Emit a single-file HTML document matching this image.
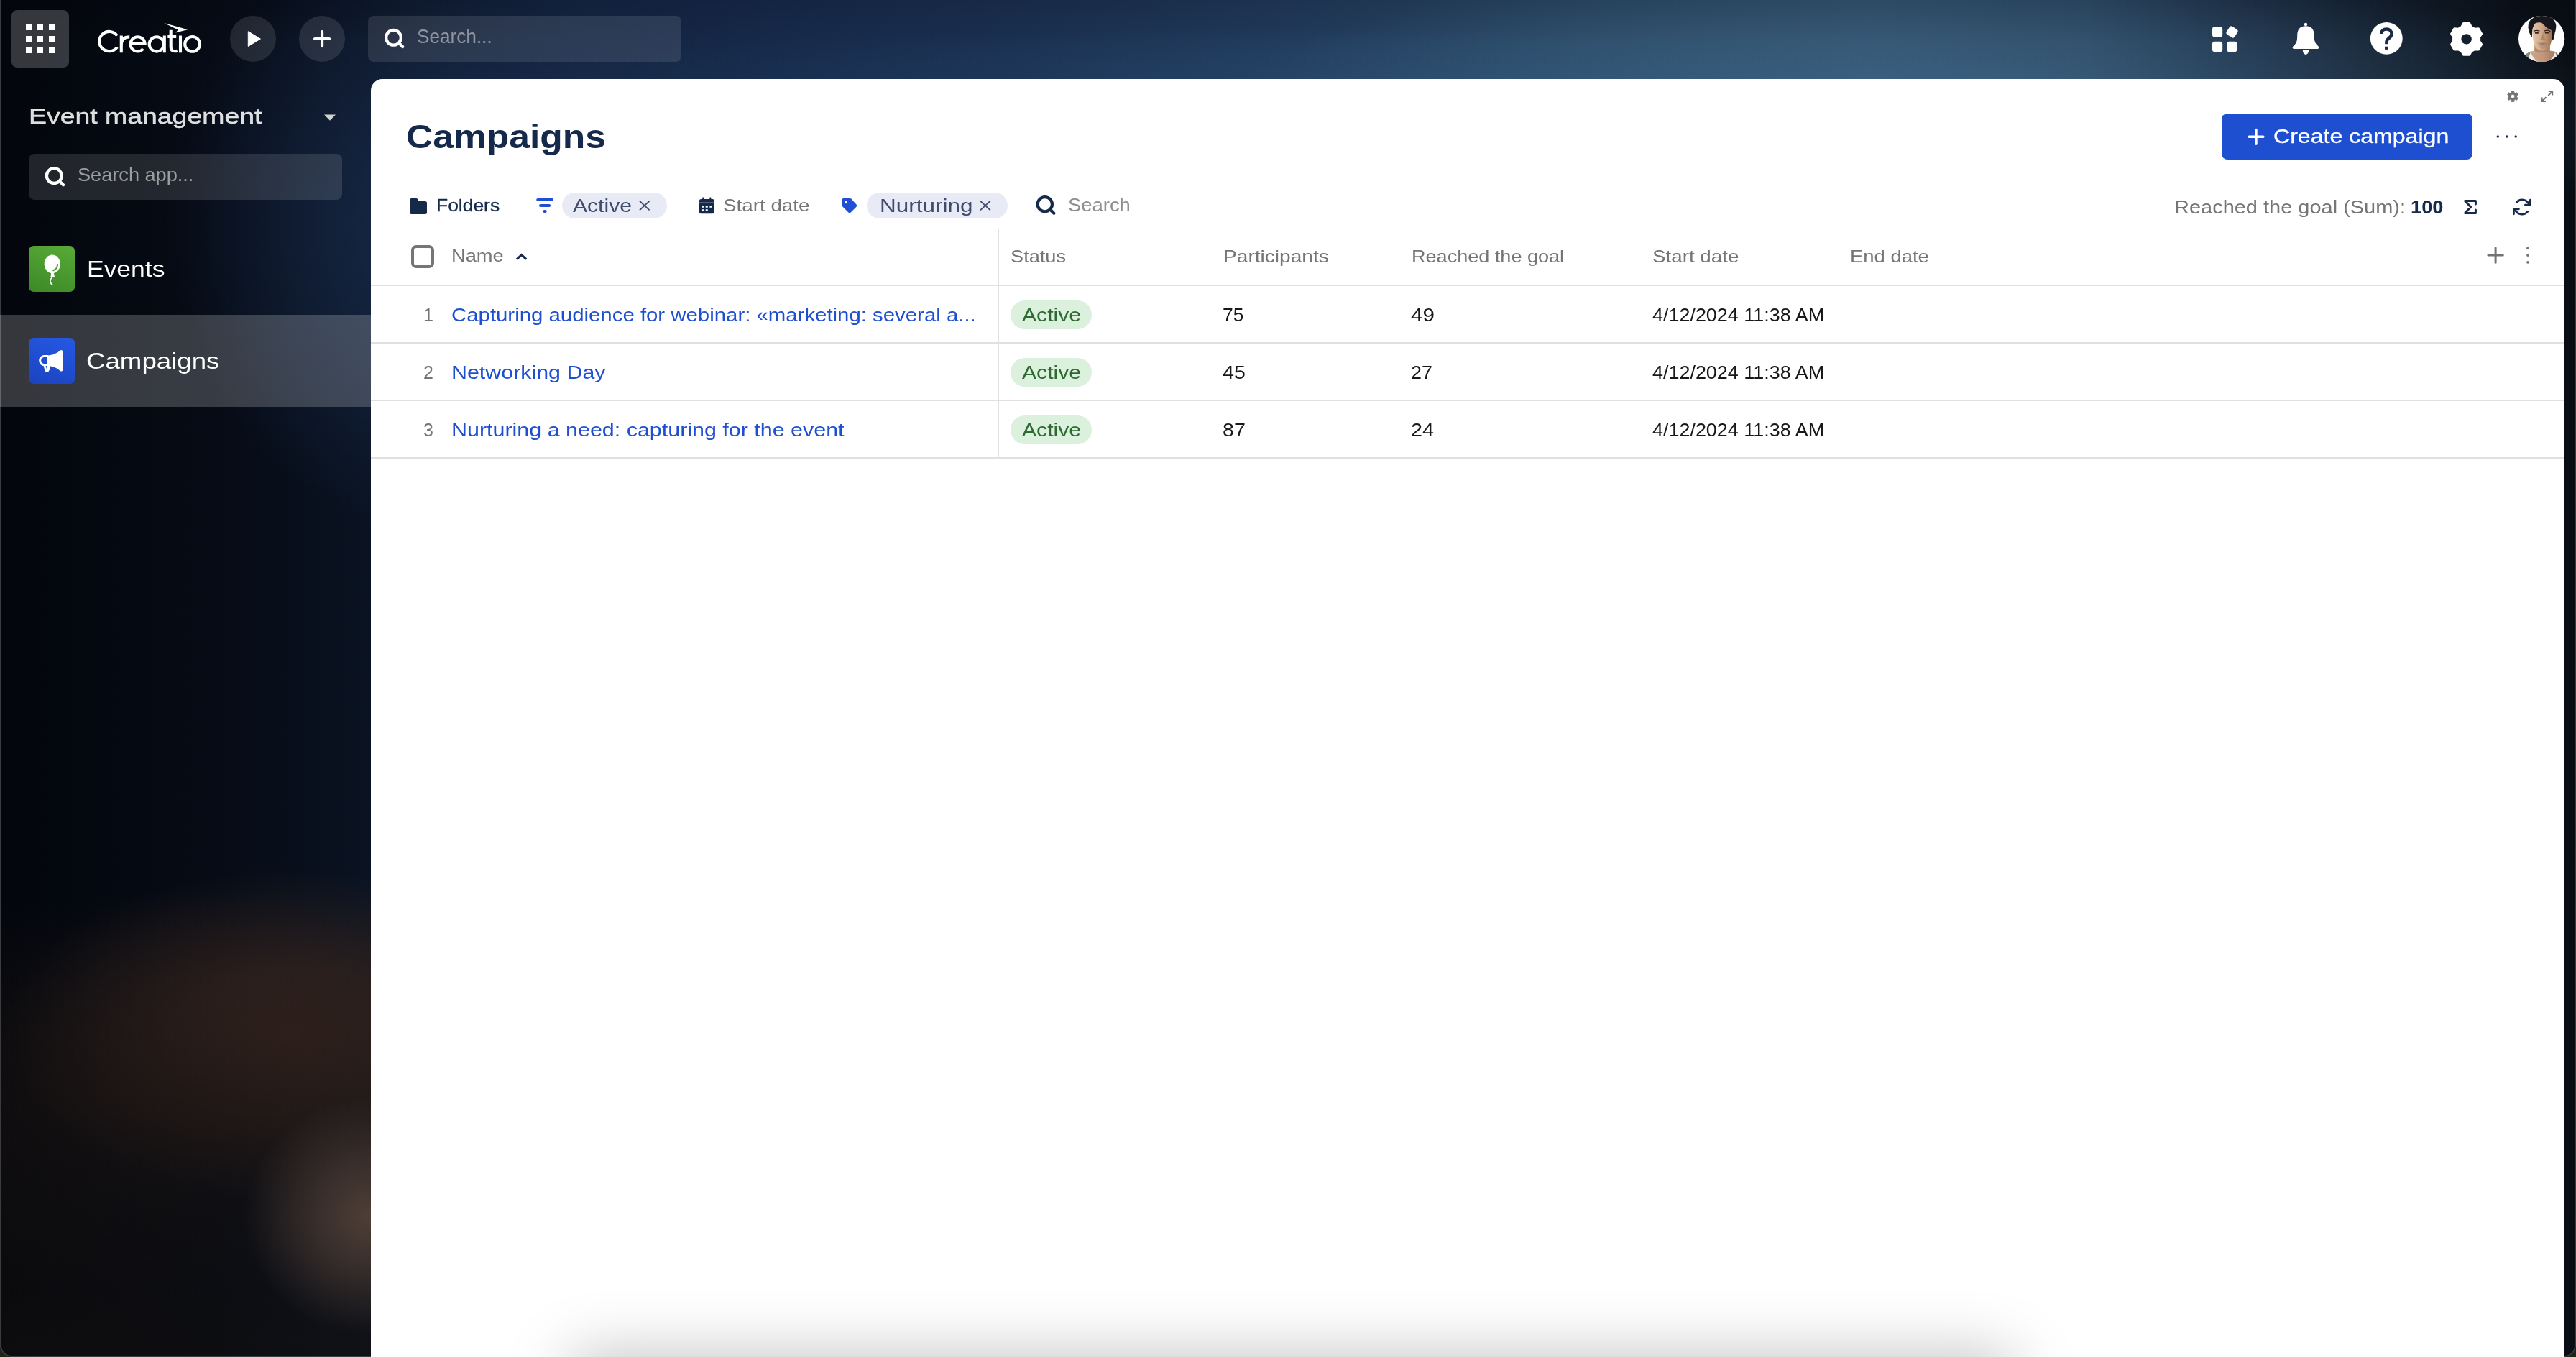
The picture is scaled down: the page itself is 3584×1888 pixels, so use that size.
<!DOCTYPE html>
<html lang="en">
<head>
<meta charset="utf-8">
<title>Campaigns</title>
<style>
*{box-sizing:border-box;margin:0;padding:0}
html,body{width:3584px;height:1888px;overflow:hidden;background:#1d2612;font-family:"Liberation Sans",sans-serif}
#app{position:absolute;left:0;top:0;width:3584px;height:1888px;overflow:hidden;border-radius:0 0 16px 16px;
 background:
  radial-gradient(ellipse 175px 165px at 515px 1692px,#4f3e36 0%,rgba(79,62,54,.62) 45%,rgba(60,48,44,0) 100%),
  linear-gradient(180deg,rgba(0,0,8,.13) 0px,rgba(0,0,8,0) 60px),
  radial-gradient(ellipse 1300px 75px at 1900px 114px,rgba(50,100,140,.2) 0%,rgba(50,100,140,.12) 50%,rgba(50,100,140,0) 100%),
  linear-gradient(180deg,rgba(20,16,14,0) 1350px,rgba(20,16,14,.55) 1888px) 0 0/516px 100% no-repeat,
  radial-gradient(ellipse 600px 280px at 200px 1520px,rgba(34,24,20,.55) 0%,rgba(34,24,20,0) 100%),
  radial-gradient(ellipse 400px 230px at 400px 1440px,#36251f 0%,rgba(54,37,31,.75) 40%,rgba(40,28,26,0) 100%),
  radial-gradient(ellipse 420px 440px at 650px 310px,#192c4d 0%,rgba(24,42,74,.66) 40%,rgba(20,34,60,0) 100%),
  radial-gradient(ellipse 1000px 230px at 2680px 170px,rgba(70,112,145,.7) 0%,rgba(64,102,134,.46) 40%,rgba(50,84,114,0) 100%),
  linear-gradient(90deg,#03060c 0px,#060b15 300px,#0a1322 520px,#13233f 800px,#16294a 1050px,#1a2f50 1400px,#213a5b 1800px,#2a4865 2200px,#31516d 2600px,#2b4761 2900px,#1d2f46 3120px,#131e2c 3320px,#0b1119 3500px,#090d13 3584px);
}
#app:before{content:"";position:absolute;left:0;top:0;right:0;bottom:0;border:2px solid #3b3e44;border-top:0;border-radius:0 0 16px 16px;pointer-events:none}
.t{position:absolute;white-space:nowrap;line-height:1;display:block;transform-origin:0 0;will-change:transform}
.abs{position:absolute}
svg{position:absolute;overflow:visible}
#panel{position:absolute;left:516px;top:110px;width:3052px;height:1778px;background:#fff;border-radius:16px 16px 0 0;overflow:hidden}
#panel .sh{position:absolute;left:279px;top:1779px;width:2004px;height:100px;box-shadow:0 0 90px rgba(0,0,0,.27)}
.hl{position:absolute;left:516px;width:3052px;height:2px;background:#e0e0e0}
.chip{position:absolute;border-radius:40px}
</style>
</head>
<body>
<div id="app">
<div class="abs" style="left:16px;top:14px;width:80px;height:80px;border-radius:8px;background:rgba(255,255,255,.2)"></div>
<div class="abs" style="left:320px;top:22px;width:64px;height:64px;border-radius:50%;background:rgba(255,255,255,.11)"></div>
<div class="abs" style="left:416px;top:22px;width:64px;height:64px;border-radius:50%;background:rgba(255,255,255,.11)"></div>
<div class="abs" style="left:512px;top:22px;width:436px;height:64px;border-radius:8px;background:rgba(255,255,255,.105)"></div>
<span class="t " style="left:580.00px;top:37.30px;font-size:28px;color:rgba(255,255,255,.48);transform:scaleX(0.9330);">Search...</span>
<span class="t " style="left:40.00px;top:147.10px;font-size:30px;color:rgba(255,255,255,.86);transform:scaleX(1.2469);-webkit-text-stroke:0.4px rgba(255,255,255,.86);">Event management</span>
<div class="abs" style="left:40px;top:214px;width:436px;height:64px;border-radius:8px;background:rgba(255,255,255,.12)"></div>
<span class="t " style="left:108.00px;top:230.49px;font-size:26px;color:rgba(255,255,255,.55);transform:scaleX(1.0436);">Search app...</span>
<div class="abs" style="left:0;top:438px;width:516px;height:128px;background:rgba(255,255,255,.2)"></div>
<div class="abs" style="left:40px;top:342px;width:64px;height:64px;border-radius:7px;background:linear-gradient(200deg,#58ab38,#3d8827)"></div>
<span class="t " style="left:120.70px;top:357.91px;font-size:32px;color:#ffffff;transform:scaleX(1.1079);">Events</span>
<div class="abs" style="left:40px;top:470px;width:64px;height:64px;border-radius:7px;background:linear-gradient(200deg,#2559e4,#1b43bf)"></div>
<span class="t " style="left:120.00px;top:485.71px;font-size:32px;color:#ffffff;transform:scaleX(1.1456);">Campaigns</span>
<div class="abs" style="left:0;top:0;width:2px;height:1888px;background:#3a3c40"></div>
<div class="abs" style="left:0;top:438px;width:2px;height:128px;background:#63666b"></div>
<div id="panel"><div class="sh"></div></div>
<span class="t " style="left:565.00px;top:166.56px;font-size:46px;color:#15294b;transform:scaleX(1.1210);font-weight:700;">Campaigns</span>
<div class="abs" style="left:3091px;top:158px;width:349px;height:64px;border-radius:8px;background:#1f4fd1"></div>
<span class="t " style="left:3163.00px;top:176.30px;font-size:28px;color:#ffffff;transform:scaleX(1.1454);-webkit-text-stroke:0.3px #ffffff;">Create campaign</span>
<span class="t " style="left:607.30px;top:273.68px;font-size:24px;color:#15294b;transform:scaleX(1.1013);-webkit-text-stroke:0.3px #15294b;">Folders</span>
<div class="chip" style="left:782px;top:268px;width:146px;height:36px;background:#e8eaf6"></div>
<span class="t " style="left:797.30px;top:272.79px;font-size:26px;color:#3f4c6e;transform:scaleX(1.1576);">Active</span>
<span class="t " style="left:1005.60px;top:273.78px;font-size:24px;color:#757575;transform:scaleX(1.1577);">Start date</span>
<div class="chip" style="left:1206px;top:268px;width:196px;height:36px;background:#e8eaf6"></div>
<span class="t " style="left:1223.50px;top:272.79px;font-size:26px;color:#3f4c6e;transform:scaleX(1.2103);">Nurturing</span>
<span class="t " style="left:1486.00px;top:271.74px;font-size:26px;color:#8e8e8e;transform:scaleX(1.0545);">Search</span>
<span class="t " style="left:3024.75px;top:274.99px;font-size:26px;color:#757575;transform:scaleX(1.1142);">Reached the goal (Sum):</span>
<span class="t " style="left:3353.90px;top:274.79px;font-size:26px;color:#15294b;transform:scaleX(1.0460);font-weight:700;">100</span>
<div class="abs" style="left:572px;top:341px;width:32px;height:32px;border:4px solid #757575;border-radius:7px"></div>
<span class="t " style="left:628.25px;top:344.18px;font-size:24px;color:#757575;transform:scaleX(1.1367);">Name</span>
<span class="t " style="left:1406.00px;top:344.68px;font-size:24px;color:#757575;transform:scaleX(1.1324);">Status</span>
<span class="t " style="left:1701.50px;top:344.68px;font-size:24px;color:#757575;transform:scaleX(1.1713);">Participants</span>
<span class="t " style="left:1964.00px;top:344.68px;font-size:24px;color:#757575;transform:scaleX(1.1275);">Reached the goal</span>
<span class="t " style="left:2299.00px;top:344.68px;font-size:24px;color:#757575;transform:scaleX(1.1562);">Start date</span>
<span class="t " style="left:2573.80px;top:344.68px;font-size:24px;color:#757575;transform:scaleX(1.1427);">End date</span>
<div class="abs" style="left:1388px;top:318px;width:2px;height:319px;background:#e0e0e0"></div>
<div class="hl" style="top:396px"></div>
<div class="hl" style="top:476px"></div>
<div class="hl" style="top:556px"></div>
<div class="hl" style="top:636px"></div>
<span class="t" style="left:589.30px;top:425.59px;font-size:25px;color:#757575">1</span>
<span class="t " style="left:627.75px;top:424.74px;font-size:26px;color:#1d4fd0;transform:scaleX(1.1296);">Capturing audience for webinar: «marketing: several a...</span>
<div class="chip" style="left:1406px;top:418px;width:113px;height:40px;background:#dcf0de"></div>
<span class="t " style="left:1421.50px;top:424.74px;font-size:26px;color:#2c6a31;transform:scaleX(1.1590);">Active</span>
<span class="t " style="left:1701.00px;top:424.74px;font-size:26px;color:#181818;transform:scaleX(1.0172);">75</span>
<span class="t " style="left:1963.00px;top:424.74px;font-size:26px;color:#181818;transform:scaleX(1.1379);">49</span>
<span class="t " style="left:2299.00px;top:424.74px;font-size:26px;color:#181818;transform:scaleX(1.0358);">4/12/2024 11:38 AM</span>
<span class="t" style="left:589.30px;top:505.59px;font-size:25px;color:#757575">2</span>
<span class="t " style="left:627.75px;top:504.74px;font-size:26px;color:#1d4fd0;transform:scaleX(1.1689);">Networking Day</span>
<div class="chip" style="left:1406px;top:498px;width:113px;height:40px;background:#dcf0de"></div>
<span class="t " style="left:1421.50px;top:504.74px;font-size:26px;color:#2c6a31;transform:scaleX(1.1590);">Active</span>
<span class="t " style="left:1701.00px;top:504.74px;font-size:26px;color:#181818;transform:scaleX(1.1034);">45</span>
<span class="t " style="left:1963.00px;top:504.74px;font-size:26px;color:#181818;transform:scaleX(1.0345);">27</span>
<span class="t " style="left:2299.00px;top:504.74px;font-size:26px;color:#181818;transform:scaleX(1.0358);">4/12/2024 11:38 AM</span>
<span class="t" style="left:589.30px;top:585.59px;font-size:25px;color:#757575">3</span>
<span class="t " style="left:627.75px;top:584.74px;font-size:26px;color:#1d4fd0;transform:scaleX(1.1708);">Nurturing a need: capturing for the event</span>
<div class="chip" style="left:1406px;top:578px;width:113px;height:40px;background:#dcf0de"></div>
<span class="t " style="left:1421.50px;top:584.74px;font-size:26px;color:#2c6a31;transform:scaleX(1.1590);">Active</span>
<span class="t " style="left:1701.00px;top:584.74px;font-size:26px;color:#181818;transform:scaleX(1.1034);">87</span>
<span class="t " style="left:1963.00px;top:584.74px;font-size:26px;color:#181818;transform:scaleX(1.1034);">24</span>
<span class="t " style="left:2299.00px;top:584.74px;font-size:26px;color:#181818;transform:scaleX(1.0358);">4/12/2024 11:38 AM</span>
<svg style="left:0;top:0;pointer-events:none" width="3584" height="1888" viewBox="0 0 3584 1888"><g fill="#fff"><rect x="36" y="34" width="8" height="8"/><rect x="52" y="34" width="8" height="8"/><rect x="68" y="34" width="8" height="8"/><rect x="36" y="50" width="8" height="8"/><rect x="52" y="50" width="8" height="8"/><rect x="68" y="50" width="8" height="8"/><rect x="36" y="66" width="8" height="8"/><rect x="52" y="66" width="8" height="8"/><rect x="68" y="66" width="8" height="8"/></g><g fill="none" stroke="#fff" stroke-width="4.1"><path d="M163 49.6 A13.7 13.7 0 1 0 163 65.6"/><path d="M168.8 49.5 V73.3 M168.8 62.5 C168.8 55 172.5 51.4 180.2 51.4"/><path d="M181.8 60.4 H201.6 A10.1 10.1 0 1 0 199.2 68"/><circle cx="217.9" cy="61.4" r="10.2"/><path d="M228.8 49.5 V73.3"/><path d="M237.7 41.8 V65.5 C237.7 69.5 240 71.3 243.5 71.3 C244.8 71.3 245.8 71 246.6 70.6 M233.3 50.9 H245.2"/><path d="M251 49.5 V73.3"/><circle cx="267.65" cy="61.4" r="10.4"/></g><path fill="#fff" d="M228.2 32 L261 41.2 L244.4 45.6 L247.6 41.4 Z"/><path fill="#fff" stroke="#fff" stroke-width="1" stroke-linejoin="round" d="M345.3 43.7 L362.4 54.05 L345.3 64.5 Z"/><path stroke="#fff" stroke-width="4.1" stroke-linecap="round" d="M448.1 44 V64.1 M438 54.05 H458.1"/><g fill="none" stroke="#fff" stroke-width="4.3" stroke-linecap="round"><circle cx="547.5" cy="52.3" r="10.4"/><path d="M555.45 60.25 L560.21 65.01"/></g><g fill="none" stroke="#fff" stroke-width="4.3" stroke-linecap="round"><circle cx="75.3" cy="244.6" r="10.4"/><path d="M83.25 252.55 L88.01 257.31"/></g><g fill="none" stroke="#15294b" stroke-width="4.2" stroke-linecap="round"><circle cx="1453.8" cy="284.2" r="10.1"/><path d="M1461.54 291.94 L1466.42 296.82"/></g><path fill="#d2d2d2" d="M451 159.6 H467 L459 167.8 Z"/><g transform="translate(40 342)"><ellipse cx="32.8" cy="25.3" rx="11.1" ry="12.9" fill="#fff"/><path fill="#fff" d="M31 37.5 H34.7 L36.1 43.3 H30.4 L30.9 40.6 Z"/><path fill="none" stroke="#fff" stroke-width="1.6" stroke-linecap="round" d="M32.8 43.3 C30.5 46 29.3 49 30.4 51.2 C31 52.5 31.8 53.5 32.8 54.2"/><path fill="none" stroke="#4b9a30" stroke-width="2" stroke-linecap="round" d="M40.1 26 C39.8 30 37.5 33 34.2 34.3"/></g><g transform="translate(40 470)"><path fill="#fff" d="M26 24.6 C34 24.2 39 21.6 43.8 17.6 C45.4 16.4 47.1 17.3 47.1 19.2 V44.4 C47.1 46.3 45.4 47.2 43.8 46 C39 42 34 39.6 26 39.1 Z"/><path fill="none" stroke="#fff" stroke-width="3" d="M27 25.5 H21.65 A6.05 6.05 0 0 0 21.65 37.6 H27"/><path fill="none" stroke="#fff" stroke-width="3" stroke-linejoin="round" stroke-linecap="round" d="M22.1 38.6 L23.9 45.3 C24.3 46.3 25.3 46.6 26.3 45.9 L27.5 44 V38.6"/></g><path fill="#737373" fill-rule="evenodd" stroke="#737373" stroke-width="0.8" stroke-linejoin="round" d="M3497.73 126.55 L3494.27 126.55 L3494.08 128.79 L3492.40 129.76 L3490.37 128.80 L3488.64 131.80 L3490.49 133.08 L3490.49 135.02 L3488.64 136.30 L3490.37 139.30 L3492.40 138.34 L3494.08 139.31 L3494.27 141.55 L3497.73 141.55 L3497.92 139.31 L3499.60 138.34 L3501.63 139.30 L3503.36 136.30 L3501.51 135.02 L3501.51 133.08 L3503.36 131.80 L3501.63 128.80 L3499.60 129.76 L3497.92 128.79 Z M3498.8 134.05 A2.8 2.8 0 1 0 3493.2 134.05 A2.8 2.8 0 1 0 3498.8 134.05 Z"/><g fill="none" stroke="#737373" stroke-width="2"><path d="M3545.8 127.1 H3551.2 V132.5 M3551 127.3 L3545.3 133"/><path d="M3536.6 135.6 V141 H3542 M3536.8 140.8 L3542.5 135.1"/></g><path stroke="#fff" stroke-width="3.4" stroke-linecap="round" d="M3139 180.4 V200.2 M3129.1 190.3 H3148.9"/><g fill="#15294b"><circle cx="3475.3" cy="190" r="1.7"/><circle cx="3487.8" cy="190" r="1.7"/><circle cx="3500.2" cy="190" r="1.7"/></g><path fill="#15294b" d="M572.6 276 H579 C579.9 276 580.4 276.3 580.9 277.1 L582.2 279.2 C582.6 279.8 583 280 583.7 280 H591.5 A2.5 2.5 0 0 1 594 282.5 V295.4 A2.5 2.5 0 0 1 591.5 297.9 H572.6 A2.5 2.5 0 0 1 570.1 295.4 V278.5 A2.5 2.5 0 0 1 572.6 276 Z"/><g stroke="#1e4fd6" stroke-width="4" stroke-linecap="round"><path d="M748.2 278.1 H768.1 M752 286 H764.1 M757.3 293.95 H758.7"/></g><path stroke="#3f4c6e" stroke-width="1.9" stroke-linecap="butt" d="M889.9 279.6 L903.6 292.4 M903.6 279.6 L889.9 292.4"/><path stroke="#3f4c6e" stroke-width="1.9" stroke-linecap="butt" d="M1364 279.6 L1377.8 292.4 M1377.8 279.6 L1364 292.4"/><g fill="#15294b"><rect x="977.2" y="274.6" width="2.1" height="4.5" rx="0.6"/><rect x="987.3" y="274.6" width="2.1" height="4.5" rx="0.6"/><path d="M975.4 277.1 H991.3 A2.5 2.5 0 0 1 993.8 279.6 V281.7 H972.9 V279.6 A2.5 2.5 0 0 1 975.4 277.1 Z"/><path fill-rule="evenodd" d="M972.9 282.9 H993.8 V294.8 A2.5 2.5 0 0 1 991.3 297.3 H975.4 A2.5 2.5 0 0 1 972.9 294.8 Z M976.1 286.2 V288.8 H979.2 V286.2 Z M981.7 286.2 V288.8 H984.8 V286.2 Z M987.4 286.2 V288.8 H990.5 V286.2 Z M976.1 291.3 V293.9 H979.2 V291.3 Z M981.7 291.3 V293.9 H984.8 V291.3 Z"/></g><path fill="#1e4fd6" fill-rule="evenodd" d="M1173.6 275.9 H1182.6 C1183.4 275.9 1184 276.2 1184.5 276.7 L1191.5 284.6 C1192.4 285.6 1192.4 286.8 1191.5 287.8 L1183.7 295.6 C1182.7 296.6 1181.4 296.6 1180.4 295.6 L1172.6 287.7 C1172.1 287.2 1171.9 286.6 1171.9 285.9 V277.6 C1171.9 276.6 1172.6 275.9 1173.6 275.9 Z M1178.9 281.5 A1.7 1.7 0 1 0 1175.5 281.5 A1.7 1.7 0 1 0 1178.9 281.5 Z"/><path fill="none" stroke="#15294b" stroke-width="3" stroke-linejoin="round" stroke-linecap="round" d="M3444.4 284 V279.4 H3429.6 L3437.6 288 L3429.6 296.5 H3444.4 V292"/><g fill="none" stroke="#15294b" stroke-width="2.8" stroke-linecap="round" stroke-linejoin="miter"><path d="M3501.3 281.6 A10.3 10.3 0 0 1 3518.6 284.3"/><path d="M3520.4 278.2 V285.2 H3513.4"/><path d="M3516.7 294.4 A10.3 10.3 0 0 1 3499.2 291.5"/><path d="M3497.4 297.8 V290.8 H3504.4"/></g><path fill="none" stroke="#15294b" stroke-width="3" d="M719 360.6 L725.6 354.6 L732.2 360.6"/><path stroke="#737373" stroke-width="3" stroke-linecap="round" d="M3472.1 344.8 V365.3 M3461.9 355 H3482.3"/><g fill="#737373"><circle cx="3517" cy="345.2" r="1.9"/><circle cx="3517" cy="355" r="1.9"/><circle cx="3517" cy="364.8" r="1.9"/></g><g fill="#fff"><rect x="3078" y="37.3" width="14.2" height="14.3" rx="3.4"/><rect x="3078" y="57.8" width="14.2" height="14.3" rx="3.4"/><rect x="3098.2" y="57.8" width="14.2" height="14.3" rx="3.4"/><rect x="-6.7" y="-6.7" width="13.4" height="13.4" rx="3.2" transform="translate(3105.5 44.5) rotate(33)"/></g><g fill="#fff"><circle cx="3208" cy="33.9" r="2.2"/><path d="M3208 36.2 C3199.6 36.2 3196.2 41.2 3196.2 49.5 C3196.2 57.5 3195 60.3 3190.8 64 C3188.8 65.8 3189.6 68 3192.2 68 H3223.8 C3226.4 68 3227.2 65.8 3225.2 64 C3221 60.3 3219.8 57.5 3219.8 49.5 C3219.8 41.2 3216.4 36.2 3208 36.2 Z"/><path d="M3203.9 70.1 H3212.1 C3212.1 73.4 3210.4 75.9 3208 75.9 C3205.6 75.9 3203.9 73.4 3203.9 70.1 Z"/></g><circle cx="3320.3" cy="53.4" r="22.4" fill="#fff"/><path fill="none" stroke="#1a2a44" stroke-width="4.5" d="M3313.1 46.9 C3313.1 43 3316.2 40.5 3320.3 40.5 C3324.5 40.5 3327.5 43.2 3327.5 46.9 C3327.5 50 3325.7 51.6 3323.7 53.1 C3321.7 54.6 3320.4 56 3320.4 58.4 V61.3"/><rect x="3318" y="64.7" width="4.8" height="4.2" fill="#1a2a44"/><path fill="#fff" fill-rule="evenodd" stroke="#fff" stroke-width="3.5" stroke-linejoin="round" d="M3435.61 32.77 L3427.59 32.77 L3425.15 37.60 L3420.27 40.41 L3414.87 40.11 L3410.86 47.06 L3413.82 51.58 L3413.82 57.22 L3410.86 61.74 L3414.87 68.69 L3420.27 68.39 L3425.15 71.20 L3427.59 76.03 L3435.61 76.03 L3438.05 71.20 L3442.93 68.39 L3448.33 68.69 L3452.34 61.74 L3449.38 57.22 L3449.38 51.58 L3452.34 47.06 L3448.33 40.11 L3442.93 40.41 L3438.05 37.60 Z"/><circle cx="3431.6" cy="54.4" r="7.2" fill="#12202f"/><defs><filter id="avb" x="-10%" y="-10%" width="120%" height="120%"><feGaussianBlur stdDeviation="0.55"/></filter><clipPath id="av"><circle cx="3536.1" cy="54" r="32.1"/></clipPath><linearGradient id="sk" x1="0" x2="1" y1="0" y2="0"><stop offset="0" stop-color="#e4c6aa"/><stop offset=".45" stop-color="#d2ab8b"/><stop offset=".75" stop-color="#b58a69"/><stop offset="1" stop-color="#9a7152"/></linearGradient><linearGradient id="nk" x1="0" x2="1" y1="0" y2="0"><stop offset="0" stop-color="#cfa685"/><stop offset=".5" stop-color="#c0977a"/><stop offset="1" stop-color="#a47b5d"/></linearGradient></defs><g clip-path="url(#av)"><rect x="3500" y="18" width="72" height="72" fill="#fff"/><g filter="url(#avb)"><path fill="#8b857b" d="M3506 90 C3508 80 3514 74 3522 71.3 L3528 71 L3530 90 Z M3566 90 C3564 80 3560 74.5 3553.6 71.5 L3548 71 L3546 90 Z"/><path fill="#ededf0" d="M3517.5 90 C3518 81 3519.5 74.5 3521.6 71.4 L3527 70.8 L3537 88 L3547 70.8 L3554 71.5 C3557 75 3558 81 3558 90 Z"/><path fill="url(#nk)" d="M3526 60 H3547.8 V70.5 C3551.5 71.2 3554.2 71.6 3555 72 C3553 80 3548 86 3538 88.5 C3529 86.5 3523 80 3521 71.8 C3522.5 71.4 3524.5 71.2 3526 71 Z"/><path fill="#a17a5e" opacity=".55" d="M3527 66.5 C3531 70.5 3543 70.8 3547.6 64 L3547.8 70.5 C3543 74 3531 74 3526 70.5 Z"/><path fill="url(#sk)" d="M3523.2 42 C3523.2 33 3528 29.5 3537 29.5 C3546 29.5 3550.6 33.5 3550.6 42 C3550.6 47 3550.6 53 3549.6 58.5 C3548.5 63 3546.5 66.5 3543.5 68.8 C3540.5 71 3534.5 71.2 3531.5 69 C3528.5 67 3526.3 63.5 3525.3 59.5 C3524 54 3523.2 48 3523.2 42 Z"/><path fill="#9c7355" opacity=".6" d="M3538.2 44 C3538.6 49 3539.2 52 3541.3 54.6 C3539.5 55.6 3536.5 55.8 3534 54.8 C3536.5 53.5 3537.5 49 3538.2 44 Z"/><path fill="#8f7560" opacity=".28" d="M3530 58.8 C3533.5 57.4 3540.5 57.4 3544.2 58.8 C3544 62.5 3542.5 67 3537.5 68 C3532.5 67.3 3530.3 63 3530 58.8 Z"/><path fill="#a06a66" opacity=".9" d="M3532.7 60.4 C3535.5 59.7 3539.5 59.7 3542.4 60.4 C3540 62.2 3535 62.2 3532.7 60.4 Z"/><path fill="#18171b" d="M3517.5 38.2 C3517.6 33.5 3518.3 31 3519.1 30.2 C3520.3 27.5 3522 26.3 3523.9 25.4 C3526.5 22.4 3529 20.7 3531.8 20 C3535 19 3538.2 19 3541.4 19.6 C3545 20.5 3548 22.5 3550.4 25.4 C3553 27 3554.6 29 3555.2 31.3 C3556.3 33.5 3556.6 36 3556.2 38.2 C3556 41 3555.5 43.5 3554.6 45.6 C3554.3 49.5 3553.6 52.5 3552.5 55.1 C3551.8 56.4 3551 56.6 3550.2 56.4 C3550.6 51.5 3550.5 46.5 3549.9 41.9 C3549 41.6 3547.8 41 3546.7 40.3 C3544 39.3 3542 37.5 3540.3 35.5 C3539 34.5 3538 33.4 3537.1 32.3 C3536 31.7 3535 31.3 3534 31.3 C3531.5 31.1 3529.5 31.5 3527.6 32.3 C3526.3 33.5 3525.5 35 3524.9 36.6 C3524 38.3 3523.5 40 3523.3 41.9 C3523 45.5 3522.8 48.7 3522.9 52 C3521.6 50.8 3520.7 49.4 3520.2 47.7 C3518.7 45 3517.8 41.7 3517.5 38.2 Z"/><path stroke="#2b211e" stroke-width="1.2" stroke-linecap="round" fill="none" d="M3525.4 43.4 C3527.3 42.3 3530.3 42.2 3533 43.1 M3540.4 43 C3542.7 41.9 3545.7 42 3548 43.4"/><path stroke="#2d2624" stroke-width="1.7" stroke-linecap="round" d="M3527.6 45.8 H3531.2 M3541.6 45.7 H3545.4"/></g></g></svg>
</div>
</body>
</html>
